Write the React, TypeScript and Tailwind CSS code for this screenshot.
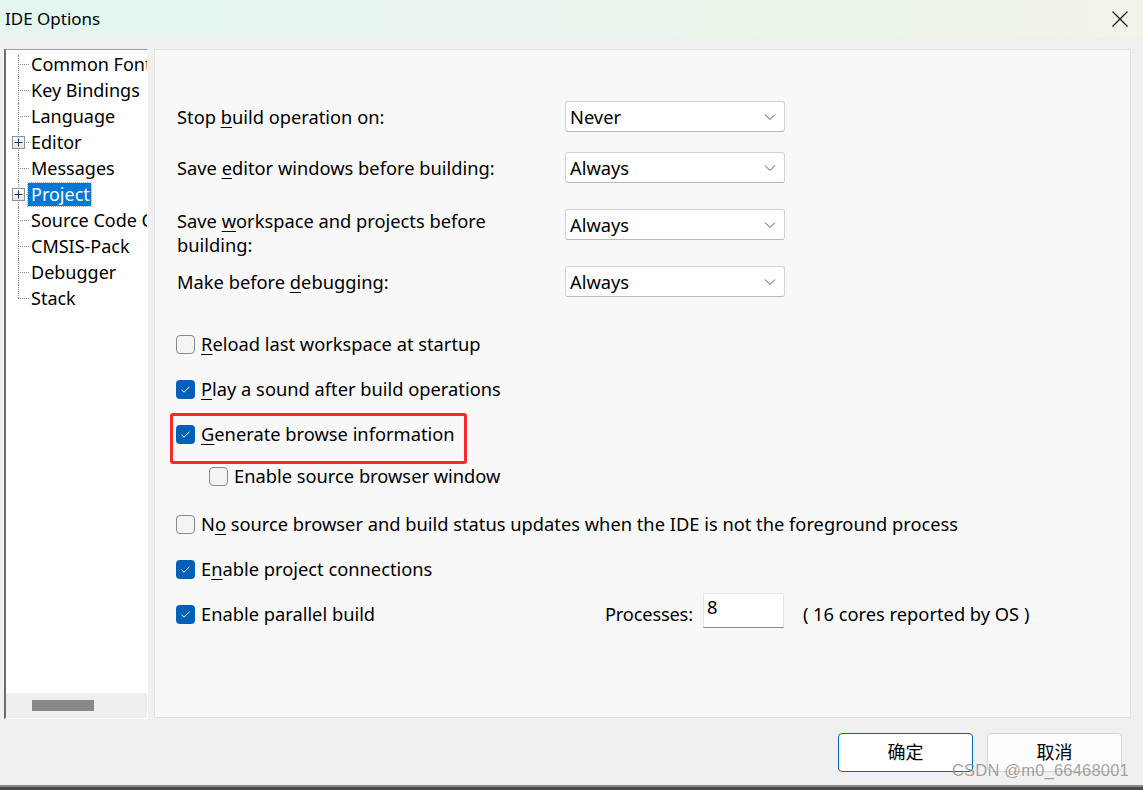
import React from 'react';

const font = "font-['Noto_Sans','Noto_Sans_CJK_SC',sans-serif]";

const treeItems = [
  { label: 'Common Fonts', plus: false },
  { label: 'Key Bindings', plus: false },
  { label: 'Language', plus: false },
  { label: 'Editor', plus: true },
  { label: 'Messages', plus: false },
  { label: 'Project', plus: true, selected: true },
  { label: 'Source Code Control', plus: false },
  { label: 'CMSIS-Pack', plus: false },
  { label: 'Debugger', plus: false },
  { label: 'Stack', plus: false },
];

// text with one underlined access key
const Key = ({ pre, k, post }: { pre?: string; k: string; post?: string }) => (
  <span>
    {pre}
    <span className="underline underline-offset-[3px] decoration-1">{k}</span>
    {post}
  </span>
);

const Chevron = () => (
  <svg width="12" height="8" viewBox="0 0 12 8" className="text-[#555]">
    <path d="M1 1.5 L6 6.5 L11 1.5" fill="none" stroke="currentColor" strokeWidth="1" />
  </svg>
);

const Select = ({ value }: { value: string }) => (
  <div className="w-[220px] h-[31px] bg-white border border-[#d3d3d3] border-b-[#b8b8b8] rounded-[3px] flex items-center justify-between pl-[4px] pr-[8px] shrink-0">
    <span>{value}</span>
    <Chevron />
  </div>
);

const CheckBox = ({ checked }: { checked?: boolean }) =>
  checked ? (
    <div className="w-[19px] h-[19px] rounded-[4px] bg-[#005fb8] flex items-center justify-center shrink-0">
      <svg width="11" height="9" viewBox="0 0 11 9">
        <path d="M1.5 4.8 L4 7.2 L9.5 1.8" fill="none" stroke="white" strokeWidth="1" />
      </svg>
    </div>
  ) : (
    <div className="w-[19px] h-[19px] rounded-[4px] border border-[#8b8b8b] bg-[#f4f4f4] shrink-0" />
  );

const CheckRow = ({ checked, children, className = '' }: { checked?: boolean; children: React.ReactNode; className?: string }) => (
  <div className={`h-[24px] flex items-center gap-[6px] ${className}`}>
    <CheckBox checked={checked} />
    <span className="whitespace-nowrap">{children}</span>
  </div>
);

export default function App() {
  return (
    <div className={`relative w-[1143px] h-[790px] bg-[#f0f0f0] flex flex-col text-[18.3px] text-black overflow-hidden ${font}`}>
      {/* Title bar */}
      <div className="h-[37px] shrink-0 bg-gradient-to-r from-[#e3f6f1] to-[#eff5e7] flex items-center justify-between pl-[5px] pr-[15px]">
        <span className="text-[17px]">IDE Options</span>
        <svg width="16" height="16" viewBox="0 0 16 16">
          <path d="M0.5 0.5 L15.5 15.5 M15.5 0.5 L0.5 15.5" stroke="#111" strokeWidth="1.2" />
        </svg>
      </div>

      {/* Body */}
      <div className="flex gap-[6px] pl-[4px] mt-[12px] h-[670px] shrink-0">
        {/* Tree */}
        <div className="w-[144px] h-[670px] flex flex-col bg-white border-l-2 border-t border-l-[#6e6e6e] border-t-[#a0a0a0] border-r border-b border-r-[#fdfdfd] border-b-[#fdfdfd] overflow-hidden">
          <div className="flex-1 pt-[1px] text-[18px]">
            {treeItems.map((it, i) => (
              <div key={it.label} className="h-[26px] flex items-center">
                <div className="relative w-[24px] h-[26px] shrink-0">
                  <div
                    className={`absolute left-[12px] w-0 border-l border-dotted border-[#8a8a8a] ${
                      i === 0 ? 'top-[4px] h-[22px]' : i === treeItems.length - 1 ? 'top-0 h-[13px]' : 'top-0 h-[26px]'
                    }`}
                  />
                  <div className="absolute left-[12px] top-[13px] w-[11px] h-0 border-t border-dotted border-[#8a8a8a]" />
                  {it.plus && (
                    <div className="absolute left-[6px] top-[7px] w-[13px] h-[13px] border border-[#8f8f8f] bg-gradient-to-b from-white to-[#e6e6e6] flex items-center justify-center">
                      <svg width="9" height="9" viewBox="0 0 9 9">
                        <path d="M0.5 4.5 H8.5 M4.5 0.5 V8.5" stroke="#1f3a66" strokeWidth="1" />
                      </svg>
                    </div>
                  )}
                </div>
                <span
                  className={`whitespace-nowrap leading-[23px] px-[1px] ${
                    it.selected ? 'bg-[#0078d7] text-white outline outline-1 outline-dotted outline-[#e9a55a] -ml-[2px] pl-[3px]' : ''
                  }`}
                >
                  {it.label}
                </span>
              </div>
            ))}
          </div>
          <div className="h-[25px] bg-[#eeeeee] shrink-0 flex items-center pl-[26px]">
            <div className="w-[62px] h-[11px] bg-[#888888]" />
          </div>
        </div>

        {/* Options page */}
        <div className="w-[977px] h-[669px] bg-[#f8f8f8] border border-[#e2e2e2] pl-[22px] pt-[51px]">
          <div className="flex flex-col">
            <div className="flex items-center">
              <div className="w-[388px]"><Key pre="Stop " k="b" post="uild operation on:" /></div>
              <Select value="Never" />
            </div>
            <div className="flex items-center mt-[20px]">
              <div className="w-[388px]"><Key pre="Save " k="e" post="ditor windows before building:" /></div>
              <Select value="Always" />
            </div>
            <div className="flex items-start mt-[26px] h-[31px]">
              <div className="w-[388px] leading-[24px]">
                <Key pre="Save " k="w" post="orkspace and projects before" />
                <br />
                building:
              </div>
              <Select value="Always" />
            </div>
            <div className="flex items-center mt-[26px]">
              <div className="w-[388px]"><Key pre="Make before " k="d" post="ebugging:" /></div>
              <Select value="Always" />
            </div>
          </div>

          <div className="flex flex-col mt-[35px] -ml-[1px]">
            <CheckRow><Key k="R" post="eload last workspace at startup" /></CheckRow>
            <CheckRow checked className="mt-[21px]"><Key k="P" post="lay a sound after build operations" /></CheckRow>
            <div className="relative mt-[21px]">
              <CheckRow checked><Key k="G" post="enerate browse information" /></CheckRow>
              <div className="absolute -left-[6px] -top-[9px] w-[297px] h-[51px] border-[3px] border-[#f52a2a] rounded-[3px]" />
            </div>
            <CheckRow className="mt-[18px] ml-[33px]">Enable source browser window</CheckRow>
            <CheckRow className="mt-[24px]">
              <Key pre="N" k="o" post=" source browser and build status updates when the IDE is not the foreground process" />
            </CheckRow>
            <CheckRow checked className="mt-[21px]"><Key pre="E" k="n" post="able project connections" /></CheckRow>
            <div className="flex items-center mt-[21px] h-[24px]">
              <div className="w-[429px] shrink-0">
                <CheckRow checked>Enable parallel build</CheckRow>
              </div>
              <span className="tracking-[-0.2px]">Processes:</span>
              <div className="ml-[10px] -mt-[7px] w-[81px] h-[35px] bg-white border border-[#e4e4e4] border-b-[#8a8a8a] pl-[3px] leading-[26px]">8</div>
              <span className="ml-[19px]">( 16 cores reported by OS )</span>
            </div>
          </div>
        </div>
      </div>

      {/* Buttons */}
      <div className="flex justify-end gap-[14px] pr-[21px] mt-[14px] h-[39px] shrink-0">
        <button className="w-[135px] h-[39px] bg-white border border-[#0067c0] rounded-[4px] text-[18px]">确定</button>
        <button className="w-[135px] h-[39px] bg-[#fdfdfd] border border-[#d3d3d3] rounded-[4px] text-[18px]">取消</button>
      </div>

      <div className="flex-1" />
      <div className="h-[5px] shrink-0 border-t-2 border-[#8a8a8a] bg-[#4a4a4a]" />

      {/* Watermark */}
      <div className="absolute right-[14px] bottom-[7px] text-[16.5px] text-[#8a8a8a]/80 font-['Liberation_Sans',sans-serif] tracking-[0.2px]">
        CSDN @m0_66468001
      </div>
    </div>
  );
}
